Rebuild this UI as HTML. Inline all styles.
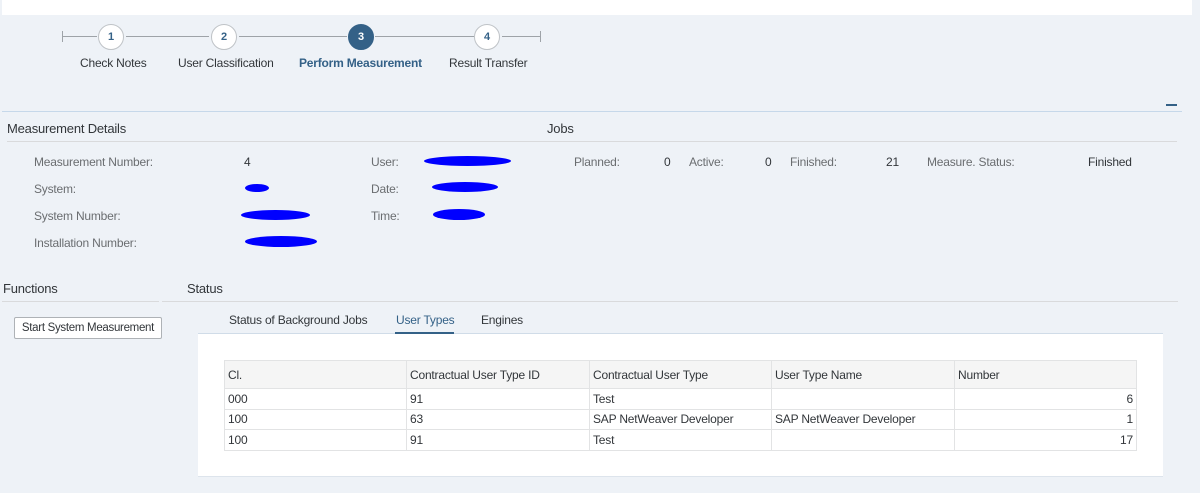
<!DOCTYPE html>
<html><head><style>
*{margin:0;padding:0;box-sizing:border-box}
body{width:1200px;height:493px;background:#eef2f7;font-family:"Liberation Sans",Arial,sans-serif;font-size:12px;letter-spacing:-0.2px;color:#32363a;position:relative;overflow:hidden}
.a{position:absolute;white-space:nowrap}
.lbl{color:#6a6d70}
.circ{position:absolute;width:26px;height:26px;border-radius:50%;border:1px solid #bfc3c7;background:#fff;color:#346187;font-weight:bold;font-size:11px;text-align:center;line-height:24px}
.ln{position:absolute;height:1px;background:#9ea3a8}
.sc{position:absolute;background:#0000ff;border-radius:50%}
table{position:absolute;left:224px;top:360px;width:913px;border-collapse:collapse;background:#fff}
td,th{border:1px solid #e2e3e4;padding:0 3px;font-weight:normal;text-align:left;height:20.6px;font-size:12px;color:#32363a}
th{background:#f5f5f5;height:28px}
td.r{text-align:right}
</style></head><body>
<div class="a" style="left:2px;top:0;width:1190px;height:15px;background:#fff"></div>
<div class="a" style="left:62px;top:31px;width:1px;height:11px;background:#9ea3a8"></div>
<div class="ln" style="left:62px;top:36px;width:35px"></div>
<div class="ln" style="left:126px;top:36px;width:83px"></div>
<div class="ln" style="left:239px;top:36px;width:108px"></div>
<div class="ln" style="left:375px;top:36px;width:99px"></div>
<div class="ln" style="left:502px;top:36px;width:39px"></div>
<div class="a" style="left:540px;top:31px;width:1px;height:11px;background:#9ea3a8"></div>
<div class="circ" style="left:98px;top:24px">1</div>
<div class="circ" style="left:211px;top:24px">2</div>
<div class="circ" style="left:348px;top:24px;background:#346187;border-color:#346187;color:#fff">3</div>
<div class="circ" style="left:474px;top:24px">4</div>
<div class="a" style="left:80px;top:56px">Check Notes</div>
<div class="a" style="left:178px;top:56px">User Classification</div>
<div class="a" style="left:299px;top:56px;color:#346187;font-weight:bold">Perform Measurement</div>
<div class="a" style="left:449px;top:56px">Result Transfer</div>
<div class="a" style="left:2px;top:111px;width:1180px;height:1px;background:#c6d8ea"></div>
<div class="a" style="left:1166px;top:104px;width:11px;height:2px;background:#346187"></div>
<div class="a" style="left:7px;top:121px;font-size:13px">Measurement Details</div>
<div class="a" style="left:547px;top:121px;font-size:13px">Jobs</div>
<div class="a" style="left:7px;top:141px;width:1170px;height:1px;background:#d9dadc"></div>
<div class="a lbl" style="left:34px;top:155px">Measurement Number:</div>
<div class="a" style="left:244px;top:155px">4</div>
<div class="a lbl" style="left:34px;top:182px">System:</div>
<div class="a lbl" style="left:34px;top:209px">System Number:</div>
<div class="a lbl" style="left:34px;top:236px">Installation Number:</div>
<div class="a lbl" style="left:371px;top:155px">User:</div>
<div class="a lbl" style="left:371px;top:182px">Date:</div>
<div class="a lbl" style="left:371px;top:209px">Time:</div>
<div class="sc" style="left:424px;top:156px;width:87px;height:10px"></div>
<div class="sc" style="left:245px;top:184px;width:24px;height:8px"></div>
<div class="sc" style="left:432px;top:182px;width:66px;height:10px"></div>
<div class="sc" style="left:241px;top:210px;width:69px;height:10px"></div>
<div class="sc" style="left:433px;top:209px;width:52px;height:11px"></div>
<div class="sc" style="left:245px;top:236px;width:72px;height:11px"></div>
<div class="a lbl" style="left:574px;top:155px">Planned:</div>
<div class="a" style="left:664px;top:155px">0</div>
<div class="a lbl" style="left:689px;top:155px">Active:</div>
<div class="a" style="left:765px;top:155px">0</div>
<div class="a lbl" style="left:790px;top:155px">Finished:</div>
<div class="a" style="left:886px;top:155px">21</div>
<div class="a lbl" style="left:927px;top:155px">Measure. Status:</div>
<div class="a" style="left:1088px;top:155px">Finished</div>
<div class="a" style="left:3px;top:281px;font-size:13px">Functions</div>
<div class="a" style="left:187px;top:281px;font-size:13px">Status</div>
<div class="a" style="left:2px;top:301px;width:157px;height:1px;background:#d9dadc"></div>
<div class="a" style="left:162px;top:301px;width:1016px;height:1px;background:#d9dadc"></div>
<div class="a" style="left:14px;top:317px;width:148px;height:22px;border:1px solid #aeb2b6;background:#fff;border-radius:2px;line-height:20px;text-align:center;font-size:11.5px;letter-spacing:-0.3px">Start System Measurement</div>
<div class="a" style="left:229px;top:313px">Status of Background Jobs</div>
<div class="a" style="left:396px;top:313px;color:#346187">User Types</div>
<div class="a" style="left:481px;top:313px">Engines</div>
<div class="a" style="left:198px;top:333px;width:965px;height:144px;background:#fff;border-top:1px solid #d0dce8;border-bottom:1px solid #dde4ec"></div>
<div class="a" style="left:395px;top:332px;width:59px;height:2px;background:#346187"></div>
<table>
<tr><th style="width:182px">Cl.</th><th style="width:183px">Contractual User Type ID</th><th style="width:182px">Contractual User Type</th><th style="width:183px">User Type Name</th><th>Number</th></tr>
<tr><td>000</td><td>91</td><td>Test</td><td></td><td class="r">6</td></tr>
<tr><td>100</td><td>63</td><td>SAP NetWeaver Developer</td><td>SAP NetWeaver Developer</td><td class="r">1</td></tr>
<tr><td>100</td><td>91</td><td>Test</td><td></td><td class="r">17</td></tr>
</table>
</body></html>
